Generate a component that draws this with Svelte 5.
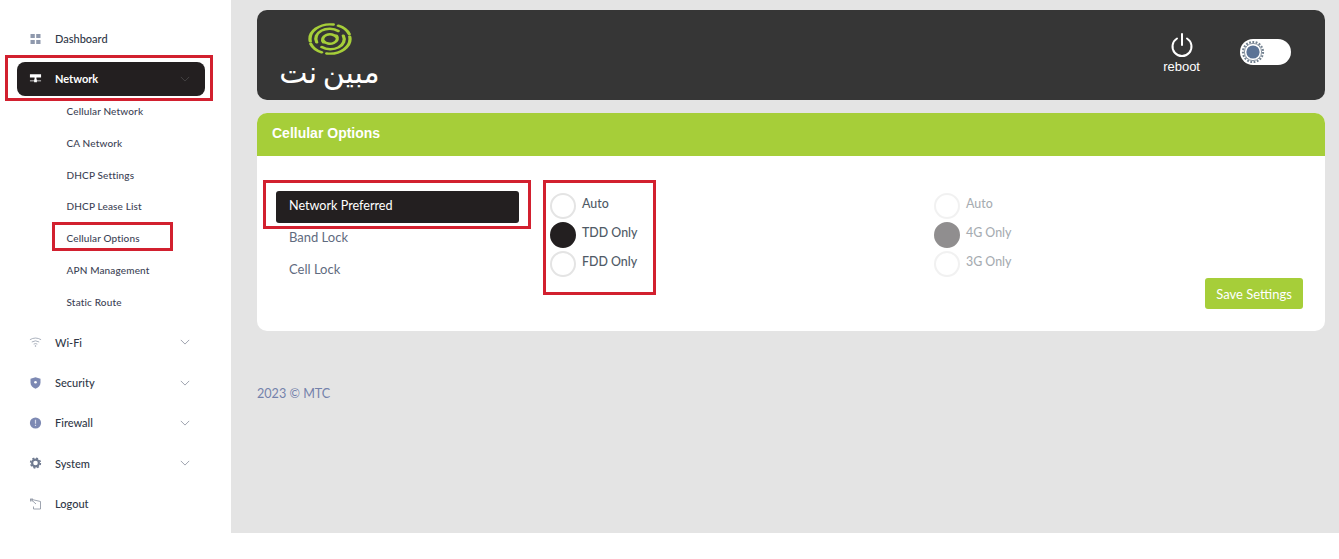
<script>
  const subs = ['Cellular Network', 'CA Network', 'DHCP Settings', 'DHCP Lease List', 'Cellular Options', 'APN Management', 'Static Route'];
  const modes = [
    { label: 'Auto', on: false },
    { label: 'TDD Only', on: true },
    { label: 'FDD Only', on: false }
  ];
  const rats = [
    { label: 'Auto', on: false },
    { label: '4G Only', on: true },
    { label: '3G Only', on: false }
  ];
</script>

<div class="page">
  <aside class="side">
    <nav>
      <a class="item">
        <svg class="ic" viewBox="0 0 12 12"><path fill="#8f99ad" d="M1 1h4.300v4H1zM6.700 1H11v4H6.700zM1 7h4.300v4H1zM6.700 7H11v4H6.700z"/></svg>
        <span>Dashboard</span>
      </a>
      <a class="item active mark mark-net">
        <svg class="ic" viewBox="0 0 14 12"><path fill="#fff" d="M1 1h12v3.500H1zM6 4.500h2V7H6zM1 7.500h12v1H1z"/><path fill="#fff" d="M5.500 6.500h3v3h-3z"/></svg>
        <span>Network</span>
        <svg class="chev" viewBox="0 0 12 7"><path d="M1 1l5 5 5-5"/></svg>
      </a>
      <ul class="subs">
        {#each subs as s}
          <li class:mark={s === 'Cellular Options'} class:mark-sub={s === 'Cellular Options'}>{s}</li>
        {/each}
      </ul>
      <a class="item wifi">
        <svg class="ic" viewBox="0 0 14 12" fill="none" stroke="#9aa2b0" stroke-width=".9"><path d="M1 3.500q6-3.500 12 0M3 6q4-2.500 8 0M5 8.300q2-1.200 4 0"/><circle cx="7" cy="10.300" r=".8" fill="#9aa2b0" stroke="none"/></svg>
        <span>Wi-Fi</span>
        <svg class="chev" viewBox="0 0 12 7"><path d="M1 1l5 5 5-5"/></svg>
      </a>
      <a class="item">
        <svg class="ic" viewBox="0 0 12 12"><path fill="#7d89b3" d="M6 .3l5 1.500v4c0 3-2.300 5-5 6-2.700-1-5-3-5-6v-4z"/><circle cx="6" cy="5.200" r="1.300" fill="#fff"/></svg>
        <span>Security</span>
        <svg class="chev" viewBox="0 0 12 7"><path d="M1 1l5 5 5-5"/></svg>
      </a>
      <a class="item">
        <svg class="ic" viewBox="0 0 12 12"><circle cx="6" cy="6" r="5.600" fill="#7d89b3"/><path fill="#d6daea" d="M5.400 2.800h1.200v4H5.400zM5.400 7.800h1.200V9H5.400z"/></svg>
        <span>Firewall</span>
        <svg class="chev" viewBox="0 0 12 7"><path d="M1 1l5 5 5-5"/></svg>
      </a>
      <a class="item">
        <svg class="ic" viewBox="0 0 12 12"><circle cx="6" cy="6" r="3.400" fill="none" stroke="#6f7a90" stroke-width="2.200"/><circle cx="6" cy="6" r="4.900" fill="none" stroke="#6f7a90" stroke-width="1.500" stroke-dasharray="2 1.850"/></svg>
        <span>System</span>
        <svg class="chev" viewBox="0 0 12 7"><path d="M1 1l5 5 5-5"/></svg>
      </a>
      <a class="item">
        <svg class="ic" viewBox="0 0 12 12" fill="none" stroke="#868e9c" stroke-width=".8"><path d="M2.500 3.500v-2l8.500 2v7.500H4v-2.500M1 1l5.500 5M1 1h2.500M1 1v2.500"/></svg>
        <span>Logout</span>
      </a>
    </nav>
  </aside>

  <main>
    <header class="top">
      <div class="logo">
        <svg class="swirl" viewBox="-24 -24 48 48" preserveAspectRatio="none" fill="none" stroke="#a6ce39" stroke-width="3.600" stroke-linecap="round">
          <g>
            <path d="M-21.500 3.600A22 22 0 0 1 3.600-21.700"/>
            <path d="M9-20A22 22 0 0 1 21-7.200"/>
            <path d="M-14.500 5A15 15 0 0 1 9-12"/>
            <path d="M-7 5A8 8 0 0 1 7-3"/>
          </g>
          <g transform="rotate(180)">
            <path d="M-21.500 3.600A22 22 0 0 1 3.600-21.700"/>
            <path d="M9-20A22 22 0 0 1 21-7.200"/>
            <path d="M-14.500 5A15 15 0 0 1 9-12"/>
            <path d="M-7 5A8 8 0 0 1 7-3"/>
          </g>
        </svg>
        <span class="brand">مبین نت</span>
      </div>
      <div class="tools">
        <div class="reboot">
          <svg viewBox="0 0 24 26" fill="none" stroke="#fff" stroke-width="2" stroke-linecap="round"><path d="M12 2v11"/><path d="M7 6.500a9.500 9.500 0 1 0 10 0"/></svg>
          <span>reboot</span>
        </div>
        <div class="toggle">
          <svg viewBox="0 0 24 24"><circle cx="12" cy="12" r="10" fill="none" stroke="#72808f" stroke-width="2.200" stroke-dasharray="1.800 1.500"/><circle cx="12" cy="12" r="8.600" fill="none" stroke="#8b96a3" stroke-width="1"/><circle cx="12" cy="12" r="6.600" fill="#5b7396"/></svg>
        </div>
      </div>
    </header>

    <section class="card">
      <h2>Cellular Options</h2>
      <div class="body">
        <div class="tabs">
          <div class="tab sel mark mark-tab">Network Preferred</div>
          <div class="tab">Band Lock</div>
          <div class="tab">Cell Lock</div>
        </div>
        <div class="radios mark mark-radio">
          {#each modes as m}
            <div class="radio">
              <i class:on={m.on}></i><span>{m.label}</span>
            </div>
          {/each}
        </div>
        <div class="radios off">
          {#each rats as m}
            <div class="radio">
              <i class:on={m.on}></i><span>{m.label}</span>
            </div>
          {/each}
        </div>
        <button class="save">Save Settings</button>
      </div>
    </section>

    <footer>2023 © MTC</footer>
  </main>
</div>

<style>
  :global(body) {
    margin: 0;
    background: #fff;
    font-family: Lato, "Liberation Sans", sans-serif;
  }
  .page {
    display: grid;
    grid-template-columns: 231px 1fr;
    height: 533px;
    overflow: hidden;
  }
  .side {
    background: #fff;
    padding-top: 18.500px;
  }
  nav {
    display: flex;
    flex-direction: column;
  }
  .item {
    display: flex;
    align-items: center;
    height: 40.400px;
    margin: 0 26px 0 17px;
    padding: 0 15px 0 12px;
    font-size: 11px;
    font-weight: 500;
    color: #2f3747;
  }
  .item span { flex: 1; }
  .ic {
    width: 13px;
    height: 12px;
    margin-right: 13px;
    flex: none;
  }
  .active {
    height: 34px;
    margin-top: 3.100px;
    margin-bottom: 0;
    background: #231f20;
    border-radius: 8px;
    color: #fff;
    font-weight: 700;
  }
  .chev {
    width: 10px;
    height: 6px;
    fill: none;
    stroke: #8d93a0;
    stroke-width: 1;
    flex: none;
  }
  .active .chev { stroke: #4b4849; }
  .subs {
    list-style: none;
    margin: 0 0 3.400px;
    padding: 0 0 0 66.500px;
  }
  .subs li {
    width: max-content;
    height: 31.800px;
    line-height: 31.800px;
    font-size: 10px;
    font-weight: 500;
    letter-spacing: .15px;
    color: #3d4355;
  }
  .mark { position: relative; }
  .mark::after {
    content: '';
    position: absolute;
    border: 3px solid #d2202f;
    pointer-events: none;
  }
  .mark-net::after { inset: -7px -8px -5px -12px; }
  .mark-sub::after { top: -1px; bottom: 4px; left: -14.500px; right: -33px; }
  .mark-tab::after { inset: -11px -12px -6px -13px; }
  .mark-radio::after { inset: -11px -1px -20px -7px; }

  main {
    background: #e4e4e4;
    padding: 10px 14px 0 26px;
  }
  .top {
    height: 90px;
    background: #363636;
    border-radius: 10px;
    display: flex;
    justify-content: space-between;
    align-items: center;
    padding: 0 34px 0 24px;
  }
  .logo {
    width: 97px;
    display: flex;
    flex-direction: column;
    align-items: center;
    margin-top: 2px;
  }
  .swirl { width: 44px; height: 32px; display: block; }
  .brand {
    font-family: "DejaVu Sans", sans-serif;
    color: #fff;
    font-size: 30px;
    word-spacing: -4px;
    line-height: 35px;
    white-space: nowrap;
    font-weight: 400;
  }
  .tools {
    display: flex;
    align-items: center;
    gap: 40px;
    margin-top: -6px;
  }
  .reboot {
    display: flex;
    flex-direction: column;
    align-items: center;
    color: #fff;
    font: 13px "Liberation Sans", sans-serif;
    line-height: 15px;
    margin-top: 2px;
  }
  .reboot svg { width: 24px; height: 26px; margin-bottom: 1.500px; }
  .toggle {
    width: 51px;
    height: 26px;
    border-radius: 13px;
    background: #fff;
    display: flex;
    align-items: center;
    padding-left: 1px;
    box-sizing: border-box;
  }
  .toggle svg { width: 24px; height: 24px; }

  .card {
    margin-top: 13px;
    background: #fff;
    border-radius: 10px;
    overflow: hidden;
    height: 218px;
  }
  h2 {
    margin: 0;
    height: 43px;
    padding-left: 15px;
    background: #a6ce39;
    color: #fff;
    font: bold 14px/41px "Liberation Sans", sans-serif;
  }
  .body {
    position: relative;
    display: flex;
    padding: 35px 0 0 19px;
  }
  .tabs {
    width: 243px;
    flex: none;
  }
  .tab {
    height: 32px;
    line-height: 28px;
    padding-left: 13px;
    font-size: 13px;
    color: #5f6b80;
    box-sizing: border-box;
  }
  .tab.sel {
    background: #231f20;
    color: #fff;
    border-radius: 3px;
    font-size: 12.600px;
    line-height: 29px;
  }
  .radios {
    flex: none;
    width: 384px;
    margin-left: 31px;
    height: 84px;
    padding-top: 2px;
    box-sizing: border-box;
  }
  .radios.mark { width: 105px; }
  .radios:not(.mark) { margin-left: 279px; }
  .radios.off { opacity: .5; }
  .radio {
    display: flex;
    height: 29px;
    align-items: flex-start;
    font-size: 12.400px;
    font-weight: 500;
    color: #4f5a66;
  }
  .radio span { line-height: 15px; margin-left: 6px; margin-top: 3px; }
  .radio i {
    display: block;
    width: 26px;
    height: 26px;
    border: 2px solid #e4e4e4;
    border-radius: 50%;
    box-sizing: border-box;
    background: #fff;
    flex: none;
  }
  .radio i.on {
    background: #231f20;
    border-color: #231f20;
  }
  .save {
    position: absolute;
    right: 22px;
    top: 122px;
    width: 98px;
    height: 31px;
    background: #a6ce39;
    border: 0;
    border-radius: 3px;
    color: #fff;
    font: 13px Lato, sans-serif;
    padding: 0;
  }
  footer {
    margin-top: 55px;
    font-size: 12.600px;
    line-height: 16px;
    color: #7482ab;
  }
</style>
